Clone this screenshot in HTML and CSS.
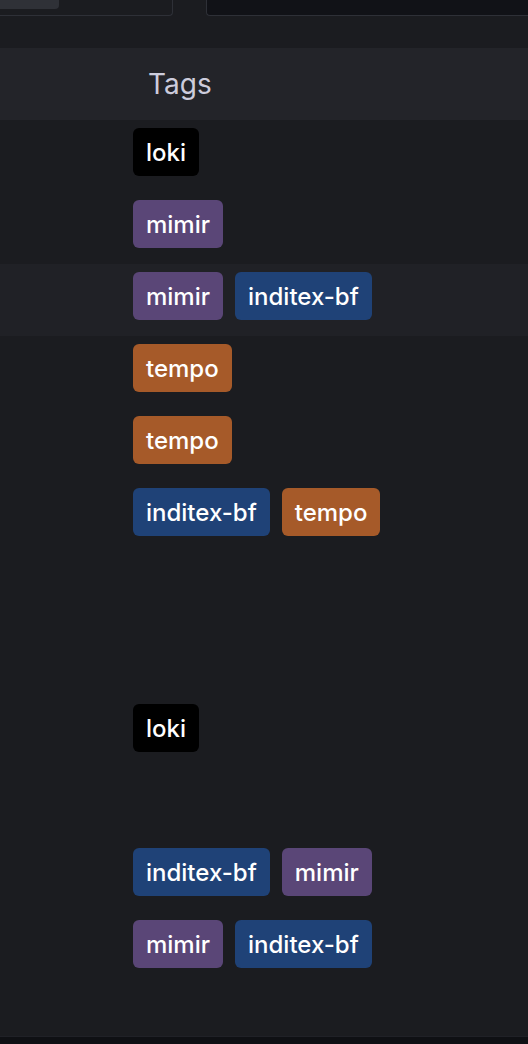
FILE: index.html
```html
<!DOCTYPE html>
<html lang="en">
<head>
    <meta charset="UTF-8">
    <meta name="viewport" content="width=device-width, initial-scale=1.0">
    <title>Dashboards</title>
    <link rel="stylesheet" href="styles.css">
</head>
<body>
    <!-- filter bar (scrolled, only its bottom edge shows) -->
    <div class="filters">
        <div class="field field-left"><div class="field-chip"></div></div>
        <div class="field field-right"></div>
    </div>

    <!-- tags table -->
    <div class="table">
        <div class="table-header">Tags</div>
        <div id="rows"></div>
    </div>
    <div class="footer-bar"></div>

    <script>
        const rows = [
            ['loki'],
            ['mimir'],
            ['mimir', 'inditex-bf'],
            ['tempo'],
            ['tempo'],
            ['inditex-bf', 'tempo'],
            [],
            [],
            ['loki'],
            [],
            ['inditex-bf', 'mimir'],
            ['mimir', 'inditex-bf']
        ];
        const hoverRow = 2;

        let html = '';
        rows.forEach((tags, index) => {
            html += `
                <div class="row ${index === hoverRow ? 'row-hover' : ''}">
                    ${tags.map(t => `<span class="tag tag-${t}">${t}</span>`).join('')}
                </div>`;
        });
        document.getElementById('rows').innerHTML = html;
    </script>
</body>
</html>
```

FILE: styles.css
```css
/* Main Styles */
body {
    margin: 0;
    background-color: #1b1c20;
    font-family: Inter, "Noto Sans", sans-serif;
    overflow: hidden;
}

/* Filter bar */
.filters {
    display: flex;
    gap: 33px;
    height: 16px;
}
.field {
    box-sizing: border-box;
    height: 16px;
    border: 1px solid #2e3037;
    border-top: none;
    background-color: #1b1c20;
}
.field-left {
    width: 173px;
    border-left: none;
    border-radius: 0 0 4px 0;
}
.field-chip {
    width: 59px;
    height: 9px;
    background-color: #2f3137;
    border-radius: 0 0 4px 0;
}
.field-right {
    flex: 1;
    border-right: none;
    border-radius: 0 0 0 4px;
    background-color: #111217;
}

/* Table */
.table {
    margin-top: 32px;
}
.table-header {
    height: 72px;
    display: flex;
    align-items: center;
    padding-left: 148px;
    background-color: #232429;
    color: #ccccdc;
    font-size: 28px;
    font-weight: 400;
}
.row {
    height: 72px;
    box-sizing: border-box;
    display: flex;
    align-items: flex-start;
    gap: 12px;
    padding: 8px 0 0 133px;
}
.row-hover {
    background-color: #202126;
}

/* Tag Styles */
.tag {
    display: inline-flex;
    align-items: center;
    height: 48px;
    box-sizing: border-box;
    padding: 0 13px;
    border-radius: 6px;
    color: #ffffff;
    font-size: 24px;
    font-weight: 500;
}
.tag-loki {
    background-color: #000000;
}
.tag-mimir {
    background-color: #5a4677;
}
.tag-inditex-bf {
    background-color: #1f4277;
}
.tag-tempo {
    background-color: #a65a29;
}

.footer-bar {
    margin-top: 52px;
    height: 8px;
    border-top: 1px solid #202127;
    background-color: #0f1014;
}
```
